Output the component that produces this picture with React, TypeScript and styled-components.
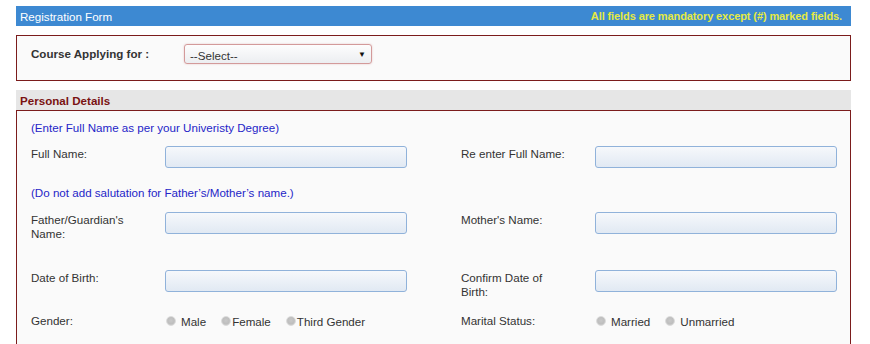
import React from "react";
import styled, { createGlobalStyle } from "styled-components";

const GlobalStyle = createGlobalStyle`
  html, body {
    margin: 0;
    padding: 0;
    background: #ffffff;
  }
  body {
    font-family: "Liberation Sans", Arial, sans-serif;
    font-size: 11.6px;
    color: #333333;
  }
`;

const Page = styled.div`
  width: 835px;
  margin: 6px 0 0 16px;
`;

const TitleBar = styled.div`
  height: 20px;
  background: #3d89d2;
  display: flex;
  align-items: center;
  justify-content: space-between;
  padding: 0 9px 0 4px;
`;

const Title = styled.span`
  color: #ffffff;
`;

const Notice = styled.span`
  color: #e6ea42;
  font-weight: bold;
  font-size: 11px;
  letter-spacing: -0.1px;
`;

const Box = styled.div<{ $pad?: string; $mt?: number }>`
  border: 1px solid #7b1c1c;
  background: #fafafa;
  padding: ${(p) => p.$pad || "0 13px 0 14px"};
  margin-top: ${(p) => p.$mt ?? 0}px;
`;

const CourseRow = styled.div`
  display: flex;
  align-items: flex-start;
  height: 44px;
  padding-top: 8px;
  box-sizing: border-box;
`;

const CourseLabel = styled.label`
  width: 153px;
  font-weight: bold;
  line-height: 13px;
  margin-top: 3px;
  color: #333;
`;

const SelectBox = styled.div`
  width: 188px;
  height: 20px;
  box-sizing: border-box;
  border: 1px solid #d39a9a;
  border-radius: 3px;
  background: linear-gradient(#fdfdfd, #eceef1);
  box-shadow: 0 0 2px rgba(200, 120, 120, 0.4);
  display: flex;
  align-items: center;
  justify-content: space-between;
  padding: 2px 5px 0 5px;
  color: #333;
`;

const Caret = styled.span`
  font-size: 8px;
  color: #111;
  margin-top: -2px;
`;

const SectionHead = styled.div`
  margin-top: 9px;
  height: 20px;
  background: #e6e6e6;
  display: flex;
  align-items: center;
  padding-left: 4px;
  font-weight: bold;
  color: #7a1212;
`;

const Note = styled.div<{ $mt: number }>`
  margin-top: ${(p) => p.$mt}px;
  line-height: 13px;
  color: #2525c8;
`;

const FieldRow = styled.div<{ $mt: number }>`
  display: flex;
  gap: 54px;
  margin-top: ${(p) => p.$mt}px;
`;

const Pair = styled.div`
  display: flex;
  width: 376px;
  align-items: flex-start;
`;

const Label = styled.label`
  width: 134px;
  line-height: 14px;
  padding-top: 1px;
  padding-right: 27px;
  box-sizing: border-box;
  color: #333;
`;

const TextInput = styled.div`
  width: 242px;
  height: 22px;
  box-sizing: border-box;
  border: 1px solid #90b2da;
  border-radius: 3px;
  background: linear-gradient(#f6f8fb, #e1e9f3);
`;

const RadioGroup = styled.div`
  display: flex;
  align-items: center;
  height: 16px;
  padding-left: 1px;
  gap: 15px;
`;

const RadioItem = styled.span<{ $tight?: boolean }>`
  display: inline-flex;
  align-items: center;
  gap: ${(p) => (p.$tight ? 1 : 5)}px;
  color: #333;
`;

const Dot = styled.span`
  width: 10px;
  height: 10px;
  box-sizing: border-box;
  border-radius: 50%;
  border: 1px solid #dadada;
  background: radial-gradient(circle at 50% 45%, #c8c8c8 0, #bebebe 55%, #dcdcdc 100%);
`;

const Radio = ({ label, tight }: { label: string; tight?: boolean }) => (
  <RadioItem $tight={tight}>
    <Dot />
    {label}
  </RadioItem>
);

const Field = ({ label }: { label: string }) => (
  <Pair>
    <Label>{label}</Label>
    <TextInput />
  </Pair>
);

const App: React.FC = () => {
  return (
    <>
      <GlobalStyle />
      <Page>
        <TitleBar>
          <Title>Registration Form</Title>
          <Notice>All fields are mandatory except (#) marked fields.</Notice>
        </TitleBar>

        <Box $mt={9}>
          <CourseRow>
            <CourseLabel>Course Applying for :</CourseLabel>
            <SelectBox>
              <span>--Select--</span>
              <Caret>▼</Caret>
            </SelectBox>
          </CourseRow>
        </Box>

        <SectionHead>Personal Details</SectionHead>
        <Box $pad="0 13px 30px 14px">
          <Note $mt={10}>(Enter Full Name as per your Univeristy Degree)</Note>
          <FieldRow $mt={12}>
            <Field label="Full Name:" />
            <Field label="Re enter Full Name:" />
          </FieldRow>
          <Note $mt={18}>(Do not add salutation for Father’s/Mother’s name.)</Note>
          <FieldRow $mt={13}>
            <Field label="Father/Guardian's Name:" />
            <Field label="Mother's Name:" />
          </FieldRow>
          <FieldRow $mt={29}>
            <Field label="Date of Birth:" />
            <Field label="Confirm Date of Birth:" />
          </FieldRow>
          <FieldRow $mt={14}>
            <Pair>
              <Label>Gender:</Label>
              <RadioGroup>
                <Radio label="Male" />
                <Radio label="Female" tight />
                <Radio label="Third Gender" tight />
              </RadioGroup>
            </Pair>
            <Pair>
              <Label>Marital Status:</Label>
              <RadioGroup>
                <Radio label="Married" />
                <Radio label="Unmarried" />
              </RadioGroup>
            </Pair>
          </FieldRow>
        </Box>
      </Page>
    </>
  );
};

export default App;
